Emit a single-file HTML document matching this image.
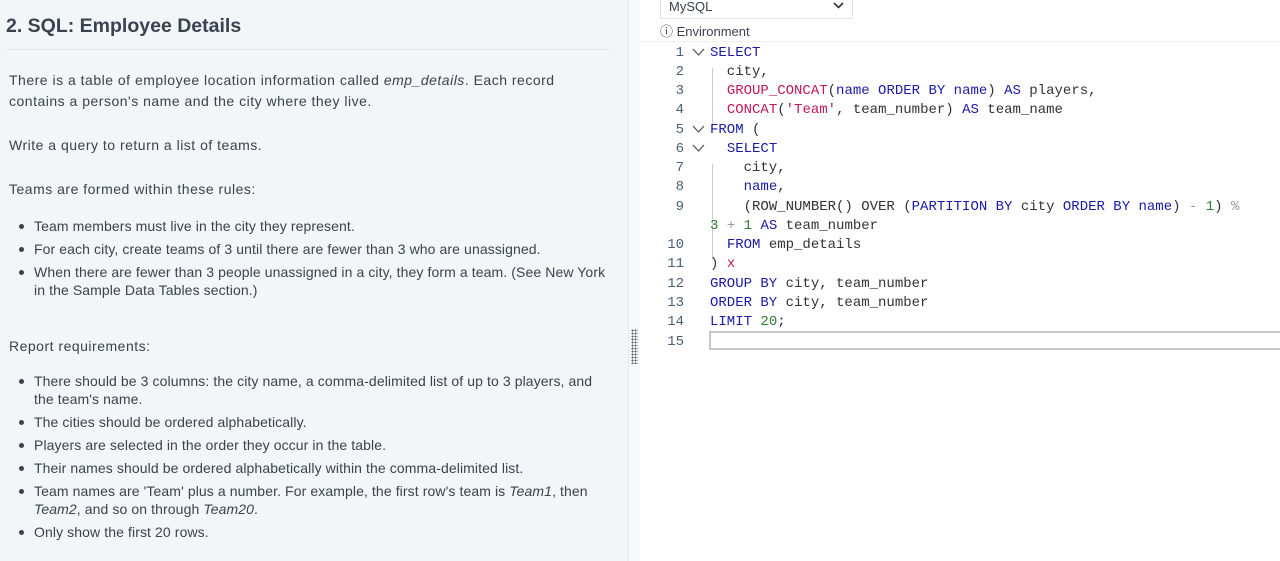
<!DOCTYPE html>
<html><head><meta charset="utf-8"><style>
*{margin:0;padding:0;box-sizing:border-box}
body{width:1280px;height:561px;overflow:hidden;background:#fff;font-family:"Liberation Sans",sans-serif;position:relative}
#left{position:absolute;left:0;top:0;width:628px;height:561px;background:#f3f6f8;color:#39424e}
#strip{position:absolute;left:628px;top:0;width:12px;height:561px;background:#f8f9fa;border-left:1px solid #e6e9ec}
#grip{position:absolute;left:631px;top:329px;width:7px;height:35px;background-image:radial-gradient(circle,#555 0.9px,transparent 1.1px);background-size:3px 3px}
h1{position:absolute;left:6px;top:15px;font-size:19.5px;font-weight:bold;color:#39424e}
.hr{position:absolute;left:6px;top:49px;width:604px;height:1px;background:#e3e6e9}
p,li{font-size:14px;line-height:21px;color:#39424e;letter-spacing:.5px}
li{letter-spacing:.1px;white-space:nowrap}
.t{position:absolute;left:9px}
ul{position:absolute;left:17px;list-style:none;width:600px}
li{position:relative;padding-left:17px;margin-bottom:5px;line-height:18px}
li:before{content:"";position:absolute;left:2px;top:7px;width:5px;height:5px;border-radius:50%;background:#39424e}
#sel{position:absolute;left:660px;top:-8px;width:193px;height:27px;border:1px solid #e3e6e9;border-top:none;font-size:13px;color:#39424e;padding:7px 8px}
#env{position:absolute;left:660px;top:21px;font-size:13px;color:#39424e}
#topline{position:absolute;left:640px;top:41px;width:640px;height:1px;background:#eceef0}
#code{position:absolute;left:640px;top:44px;font-family:"Liberation Mono",monospace;font-size:14px}
.ln{position:absolute;width:44px;text-align:right;color:#4a6078}
.l{position:absolute;left:70px;white-space:pre;color:#333}
.k{color:#1a1aa6}.f{color:#c2185b}.s{color:#c2185b}.n{color:#2e7d32}.o{color:#999}.x{color:#c2185b}
.fold{position:absolute;left:52px;top:0}
.guide{position:absolute;left:72px;width:1px;background:#ccc}
#cur{position:absolute;left:709px;top:331px;width:571px;height:19px;border:2px solid #c8c8c8;border-right:none}
</style></head><body>
<div id="left">
<h1>2. SQL: Employee Details</h1>
<div class="hr"></div>
<p class="t" style="top:70px">There is a table of employee location information called <i>emp_details</i>. Each record<br>contains a person's name and the city where they live.</p>
<p class="t" style="top:135px">Write a query to return a list of teams.</p>
<p class="t" style="top:179px">Teams are formed within these rules:</p>
<ul style="top:217px">
<li>Team members must live in the city they represent.</li>
<li>For each city, create teams of 3 until there are fewer than 3 who are unassigned.</li>
<li>When there are fewer than 3 people unassigned in a city, they form a team. (See New York<br>in the Sample Data Tables section.)</li>
</ul>
<p class="t" style="top:336px">Report requirements:</p>
<ul style="top:372px">
<li>There should be 3 columns: the city name, a comma-delimited list of up to 3 players, and<br>the team's name.</li>
<li>The cities should be ordered alphabetically.</li>
<li>Players are selected in the order they occur in the table.</li>
<li>Their names should be ordered alphabetically within the comma-delimited list.</li>
<li>Team names are 'Team' plus a number. For example, the first row's team is <i>Team1</i>, then<br><i>Team2</i>, and so on through <i>Team20</i>.</li>
<li>Only show the first 20 rows.</li>
</ul>
</div>
<div id="strip"></div><div id="grip"></div>
<div id="sel">MySQL<svg style="position:absolute;right:8px;top:10px" width="11" height="7" viewBox="0 0 11 7"><path d="M1 1l4.5 4.5L10 1" fill="none" stroke="#333" stroke-width="1.6"/></svg></div>
<div id="env">&#9432; Environment</div>
<div id="topline"></div>
<div id="code">
<div class="guide" style="top:24px;height:58px"></div>
<div class="guide" style="top:120px;height:96px"></div>
<div class="ln" style="top:1px">1</div><svg class="fold" style="top:4px" width="13" height="9" viewBox="0 0 13 9"><path d="M1 1l5.5 6L12 1" fill="none" stroke="#555" stroke-width="1.2"/></svg><div class="l" style="top:1px"><span class="k">SELECT</span></div>
<div class="ln" style="top:20px">2</div><div class="l" style="top:20px">  city,</div>
<div class="ln" style="top:39px">3</div><div class="l" style="top:39px">  <span class="f">GROUP_CONCAT</span>(<span class="k">name ORDER BY name</span>) <span class="k">AS</span> players,</div>
<div class="ln" style="top:58px">4</div><div class="l" style="top:58px">  <span class="f">CONCAT</span>(<span class="s">'Team'</span>, team_number) <span class="k">AS</span> team_name</div>
<div class="ln" style="top:78px">5</div><svg class="fold" style="top:81px" width="13" height="9" viewBox="0 0 13 9"><path d="M1 1l5.5 6L12 1" fill="none" stroke="#555" stroke-width="1.2"/></svg><div class="l" style="top:78px"><span class="k">FROM</span> (</div>
<div class="ln" style="top:97px">6</div><svg class="fold" style="top:100px" width="13" height="9" viewBox="0 0 13 9"><path d="M1 1l5.5 6L12 1" fill="none" stroke="#555" stroke-width="1.2"/></svg><div class="l" style="top:97px">  <span class="k">SELECT</span></div>
<div class="ln" style="top:116px">7</div><div class="l" style="top:116px">    city,</div>
<div class="ln" style="top:135px">8</div><div class="l" style="top:135px">    <span class="k">name</span>,</div>
<div class="ln" style="top:155px">9</div><div class="l" style="top:155px">    (ROW_NUMBER() OVER (<span class="k">PARTITION BY</span> city <span class="k">ORDER BY name</span>) <span class="o">-</span> <span class="n">1</span>) <span class="o">%</span></div>
<div class="l" style="top:174px"><span class="n">3</span> <span class="o">+</span> <span class="n">1</span> <span class="k">AS</span> team_number</div>
<div class="ln" style="top:193px">10</div><div class="l" style="top:193px">  <span class="k">FROM</span> emp_details</div>
<div class="ln" style="top:212px">11</div><div class="l" style="top:212px">) <span class="x">x</span></div>
<div class="ln" style="top:232px">12</div><div class="l" style="top:232px"><span class="k">GROUP BY</span> city, team_number</div>
<div class="ln" style="top:251px">13</div><div class="l" style="top:251px"><span class="k">ORDER BY</span> city, team_number</div>
<div class="ln" style="top:270px">14</div><div class="l" style="top:270px"><span class="k">LIMIT</span> <span class="n">20</span>;</div>
<div class="ln" style="top:290px">15</div>
</div>
<div id="cur"></div>
</body></html>
